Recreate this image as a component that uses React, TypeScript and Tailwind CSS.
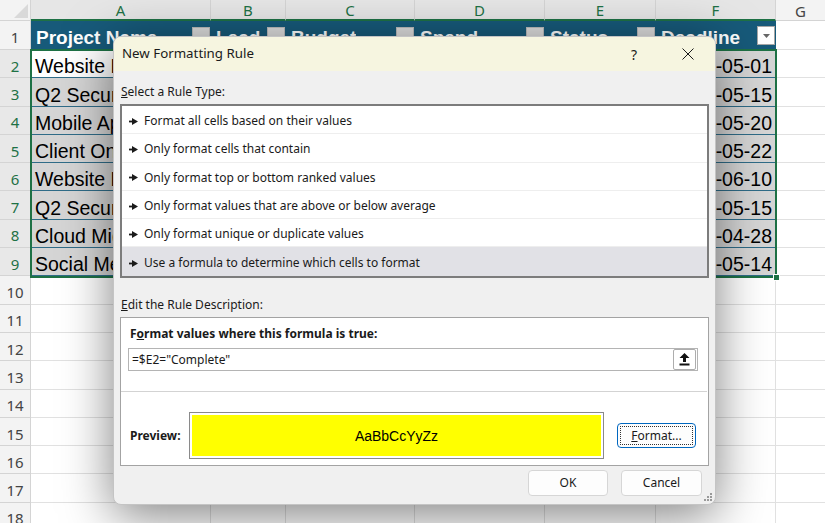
import React from 'react';

const colHeads = [
  { key: 'A', w: 'w-[180px]' },
  { key: 'B', w: 'w-[75px]' },
  { key: 'C', w: 'w-[129px]' },
  { key: 'D', w: 'w-[130px]' },
  { key: 'E', w: 'w-[111px]' },
  { key: 'F', w: 'w-[120px]' },
];

const headers = ['Project Name', 'Lead', 'Budget', 'Spend', 'Status', 'Deadline'];

const rows = [
  { name: 'Website Redesign', date: '2025-05-01' },
  { name: 'Q2 Security Audit', date: '2025-05-15' },
  { name: 'Mobile App Launch', date: '2025-05-20' },
  { name: 'Client Onboarding', date: '2025-05-22' },
  { name: 'Website Redesign', date: '2025-06-10' },
  { name: 'Q2 Security Audit', date: '2025-05-15' },
  { name: 'Cloud Migration', date: '2025-04-28' },
  { name: 'Social Media Campaign', date: '2025-05-14' },
];

const ruleTypes = [
  'Format all cells based on their values',
  'Only format cells that contain',
  'Only format top or bottom ranked values',
  'Only format values that are above or below average',
  'Only format unique or duplicate values',
  'Use a formula to determine which cells to format',
];

const RowNum = ({ n, selected }: { n: number; selected?: boolean }) => (
  <div
    className={`w-[31px] shrink-0 flex items-center justify-center pt-[4px] border-r border-b border-[#d4d4d4] font-['Noto_Sans',sans-serif] text-[15px] leading-[18px] ${
      selected ? 'bg-[#e8e8e8] text-[#1e7145]' : 'bg-[#f3f3f3] text-[#444]'
    }`}
  >
    {n}
  </div>
);

const Pointer = () => (
  <svg width="9" height="7" viewBox="0 0 9 7" className="shrink-0">
    <rect x="0" y="2.6" width="4" height="1.8" fill="#1a1a1a" />
    <polygon points="3,0 9,3.5 3,7" fill="#1a1a1a" />
  </svg>
);

const FormattingDialog = () => (
  <div className="absolute left-[113px] top-[36px] w-[603px] h-[469px] rounded-[8px] border border-[#c4c4c4] bg-[#f0f0f0] shadow-[0_10px_50px_rgba(0,0,0,0.5)] overflow-hidden flex flex-col font-['Noto_Sans',sans-serif] text-[#1a1a1a]">
    <div className="h-[34px] shrink-0 flex items-center bg-[#f6f5e0] pl-[8px]">
      <span className="text-[13.3px]">New Formatting Rule</span>
      <div className="ml-auto flex items-center">
        <div className="w-[46px] h-[34px] flex items-center justify-center text-[14px]">?</div>
        <div className="w-[46px] h-[34px] ml-[8px] mr-[4px] flex items-center justify-center">
          <svg width="12" height="12" viewBox="0 0 12 12">
            <path d="M0.5 0.5 L11.5 11.5 M11.5 0.5 L0.5 11.5" stroke="#1a1a1a" strokeWidth="1" />
          </svg>
        </div>
      </div>
    </div>

    <div className="flex flex-col px-[6px] text-[12px]">
      <div className="mt-[13px] pl-[1px] leading-[16px]">
        <span className="underline">S</span>elect a Rule Type:
      </div>

      <div className="mt-[4px] h-[174px] border-2 border-[#7c7c7c] bg-white flex flex-col">
        {ruleTypes.map((r, i) => (
          <div
            key={r}
            className={`h-[28.3px] shrink-0 flex items-center gap-[6px] pl-[7px] pt-[3px] leading-[16px] ${
              i === ruleTypes.length - 1 ? 'bg-[#e1e1e6]' : 'border-b border-[#eeeeee]'
            }`}
          >
            <Pointer />
            <span>{r}</span>
          </div>
        ))}
      </div>

      <div className="mt-[19px] pl-[1px] leading-[16px]">
        <span className="underline">E</span>dit the Rule Description:
      </div>

      <div className="mt-[4px] h-[149px] border border-[#a3a3a3] bg-white flex flex-col">
        <div className="pt-[8px] pl-[9px] font-bold leading-[16px]">
          F<span className="underline">o</span>rmat values where this formula is true:
        </div>
        <div className="mt-[6px] ml-[7px] w-[570px] h-[23px] border border-[#b4b4b4] flex items-center pl-[3px] pr-[1px] leading-[16px]">
          <span>=$E2="Complete"</span>
          <div className="ml-auto w-[23px] h-[21px] rounded-[2px] border border-[#adadad] bg-white flex items-center justify-center">
            <svg width="11" height="13" viewBox="0 0 11 13">
              <polygon points="5.5,0 10.5,5 7,5 7,9 4,9 4,5 0.5,5" fill="#111" />
              <rect x="0.5" y="10.5" width="10" height="2" fill="#111" />
            </svg>
          </div>
        </div>
        <div className="mt-[20px] mr-[1px] border-t border-[#d3d3d3]" />
        <div className="mt-[20px] flex items-center pl-[9px] leading-[16px]">
          <span className="w-[59px] font-bold">Preview:</span>
          <div className="w-[415px] h-[47px] border border-[#8a8a8a] p-[2px] bg-white">
            <div className="w-full h-full bg-[#ffff00] flex items-center justify-center font-['Liberation_Sans',sans-serif] text-[14px] text-black">
              AaBbCcYyZz
            </div>
          </div>
          <button className="ml-[13px] w-[79px] h-[25px] rounded-[4px] border border-[#0067c0] bg-[#fdfdfd] p-[2px]">
            <div className="w-full h-full border border-dotted border-[#333] flex items-center justify-center">
              <span>
                <span className="underline">F</span>ormat...
              </span>
            </div>
          </button>
        </div>
      </div>

      <div className="mt-[4px] flex justify-end gap-[13px] pr-[7px] leading-[16px]">
        <button className="w-[80px] h-[26px] rounded-[4px] border border-[#d6d6d6] bg-[#fdfdfd]">OK</button>
        <button className="w-[81px] h-[26px] rounded-[4px] border border-[#d6d6d6] bg-[#fdfdfd]">Cancel</button>
      </div>
    </div>

    <div className="absolute right-[3px] bottom-[3px] grid grid-cols-3 gap-[1px]">
      <span className="w-[2px] h-[2px]" />
      <span className="w-[2px] h-[2px]" />
      <span className="w-[2px] h-[2px] bg-[#9a9a9a]" />
      <span className="w-[2px] h-[2px]" />
      <span className="w-[2px] h-[2px] bg-[#9a9a9a]" />
      <span className="w-[2px] h-[2px] bg-[#9a9a9a]" />
      <span className="w-[2px] h-[2px] bg-[#9a9a9a]" />
      <span className="w-[2px] h-[2px] bg-[#9a9a9a]" />
      <span className="w-[2px] h-[2px] bg-[#9a9a9a]" />
    </div>
  </div>
);

const App: React.FC = () => {
  return (
    <div className="relative w-[825px] h-[523px] overflow-hidden bg-white font-['Liberation_Sans',sans-serif]">
      {/* column letters */}
      <div className="flex h-[21px]">
        <div className="w-[31px] shrink-0 relative bg-[#f3f3f3] border-r border-b border-[#d4d4d4]">
          <svg width="14" height="14" viewBox="0 0 14 14" className="absolute right-[2px] bottom-[2px]">
            <polygon points="14,0 14,14 0,14" fill="#d9d9d9" />
          </svg>
        </div>
        {colHeads.map((c) => (
          <div
            key={c.key}
            className={`${c.w} shrink-0 flex items-center justify-center pt-[1px] bg-[#e6e6e6] border-r border-[#d4d4d4] border-b-2 border-b-[#1e7145] font-['Noto_Sans',sans-serif] text-[15px] leading-[18px] text-[#1e7145]`}
          >
            {c.key}
          </div>
        ))}
        <div className="flex-1 flex items-center justify-center pt-[1px] bg-[#f3f3f3] border-b border-[#d4d4d4] font-['Noto_Sans',sans-serif] text-[15px] leading-[18px] text-[#444]">
          G
        </div>
      </div>

      {/* table header row */}
      <div className="flex h-[29px]">
        <RowNum n={1} />
        {headers.map((h, i) => (
          <div key={h} className={`${colHeads[i].w} shrink-0 flex items-center bg-[#175a7a] pl-[5px] pr-[1px]`}>
            <span className="pt-[4px] font-bold text-[19px] leading-[22px] text-white whitespace-nowrap overflow-hidden">{h}</span>
            {i === headers.length - 1 ? (
              <div className="ml-auto w-[18px] h-[19px] shrink-0 bg-white border border-[#a6a6a6] flex items-center justify-center">
                <svg width="7" height="4" viewBox="0 0 7 4">
                  <polygon points="0,0 7,0 3.5,4" fill="#666" />
                </svg>
              </div>
            ) : (
              <div className="ml-auto w-[18px] h-[18px] shrink-0 bg-[#dedede] border border-[#bcbcbc]" />
            )}
          </div>
        ))}
        <div className="flex-1 border-b border-[#e1e1e1]" />
      </div>

      {/* data rows */}
      {rows.map((r, i) => (
        <div key={i} className="flex h-[28.3px]">
          <RowNum n={i + 2} selected />
          <div
            className={`w-[180px] shrink-0 flex items-end pl-[4px] border-b border-[#2f6c88] overflow-hidden whitespace-nowrap text-[19.5px] leading-[22px] text-black ${
              i === 0 ? 'bg-white' : 'bg-[#d5d5d5]'
            }`}
          >
            {r.name}
          </div>
          <div className="w-[75px] shrink-0 bg-[#d5d5d5] border-b border-[#2f6c88]" />
          <div className="w-[129px] shrink-0 bg-[#d5d5d5] border-b border-[#2f6c88]" />
          <div className="w-[130px] shrink-0 bg-[#d5d5d5] border-b border-[#2f6c88]" />
          <div className="w-[111px] shrink-0 bg-[#d5d5d5] border-b border-[#2f6c88]" />
          <div className="w-[120px] shrink-0 flex items-end justify-end pr-[4px] bg-[#d5d5d5] border-b border-[#2f6c88] whitespace-nowrap text-[19.5px] leading-[22px] text-black">
            {r.date}
          </div>
          <div className="flex-1 border-b border-[#e1e1e1]" />
        </div>
      ))}

      {/* empty rows */}
      {[10, 11, 12, 13, 14, 15, 16, 17, 18].map((n) => (
        <div key={n} className="flex h-[28.3px]">
          <RowNum n={n} />
          {colHeads.map((c) => (
            <div key={c.key} className={`${c.w} shrink-0 border-r border-b border-[#e1e1e1]`} />
          ))}
          <div className="flex-1 border-b border-[#e1e1e1]" />
        </div>
      ))}

      {/* selection A2:F9 */}
      <div className="absolute left-[30px] top-[49px] w-[747px] h-[229px] border-2 border-[#1e7145] pointer-events-none" />
      <div className="absolute left-[773px] top-[274px] w-[7px] h-[7px] bg-[#1e7145] border border-white" />

      <FormattingDialog />
    </div>
  );
};

export default App;
